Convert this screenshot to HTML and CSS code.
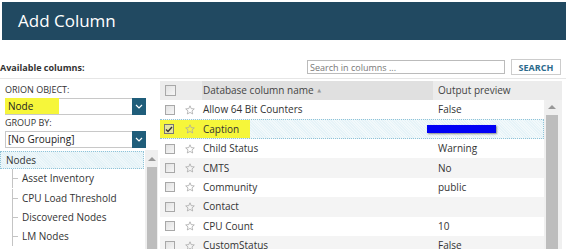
FILE: index.html
```html
<!DOCTYPE html>
<html>
<head>
<meta charset="utf-8">
<link rel="stylesheet" href="styles.css">
</head>
<body>
<svg width="0" height="0" style="position:absolute">
  <defs>
    <symbol id="star" viewBox="0 0 10 10"><path d="M5 0.8 L6.2 3.6 L9.3 3.9 L7 5.9 L7.7 9 L5 7.4 L2.3 9 L3 5.9 L0.7 3.9 L3.8 3.6 Z" fill="none" stroke="#a9a9a9" stroke-width="0.8" stroke-linejoin="round"/></symbol>
  </defs>
</svg>
<div class="header"><h1>Add Column</h1></div>
<div class="toolbar">
  <div class="avail">Available columns:</div>
  <div class="search">
    <input class="search-input" type="text" placeholder="Search in columns ...">
    <button class="search-btn">SEARCH</button>
  </div>
</div>
<div class="main">
  <div class="left">
    <div class="label">ORION OBJECT:</div>
    <div class="select"><span class="sel-text hl">Node</span><span class="sel-btn"><svg width="8" height="5" viewBox="0 0 8 5"><path d="M1 1 L4 4 L7 1" fill="none" stroke="#fff" stroke-width="1.2"/></svg></span></div>
    <div class="label">GROUP BY:</div>
    <div class="select"><span class="sel-text">[No Grouping]</span><span class="sel-btn"><svg width="8" height="5" viewBox="0 0 8 5"><path d="M1 1 L4 4 L7 1" fill="none" stroke="#fff" stroke-width="1.2"/></svg></span></div>
    <div class="tree-wrap">
      <div class="tree">
        <div class="tree-root">Nodes</div>
        <div class="tree-item"><span class="branch"></span>Asset Inventory</div>
        <div class="tree-item"><span class="branch"></span>CPU Load Threshold</div>
        <div class="tree-item"><span class="branch"></span>Discovered Nodes</div>
        <div class="tree-item"><span class="branch"></span>LM Nodes</div>
      </div>
      <div class="vscroll"><div class="arrow"></div><div class="thumb"></div></div>
    </div>
  </div>
  <div class="right">
    <div class="thead">
      <div class="c-chk"><span class="cb"></span></div>
      <div class="c-star"></div>
      <div class="c-name sorted">Database column name <span class="sort">&#9650;</span></div>
      <div class="c-out">Output preview</div>
    </div>
    <div class="tbody-wrap">
      <div class="tbody">
        <div class="row"><div class="c-chk"><span class="cb"></span></div><div class="c-star"><svg class="st"><use href="#star"/></svg></div><div class="c-name">Allow 64 Bit Counters</div><div class="c-out">False</div></div>
        <div class="row selected"><div class="hl-cells"><div class="c-chk"><span class="cb checked"><svg width="8" height="7" viewBox="0 0 8 7"><path d="M1 3.5 L3 5.5 L7 1" fill="none" stroke="#333" stroke-width="1.4"/></svg></span></div><div class="c-star"><svg class="st"><use href="#star"/></svg></div><div class="c-name">Caption</div></div><div class="c-fill"></div><div class="c-out"><span class="redact"></span></div></div>
        <div class="row"><div class="c-chk"><span class="cb"></span></div><div class="c-star"><svg class="st"><use href="#star"/></svg></div><div class="c-name">Child Status</div><div class="c-out">Warning</div></div>
        <div class="row alt"><div class="c-chk"><span class="cb"></span></div><div class="c-star"><svg class="st"><use href="#star"/></svg></div><div class="c-name">CMTS</div><div class="c-out">No</div></div>
        <div class="row"><div class="c-chk"><span class="cb"></span></div><div class="c-star"><svg class="st"><use href="#star"/></svg></div><div class="c-name">Community</div><div class="c-out">public</div></div>
        <div class="row alt"><div class="c-chk"><span class="cb"></span></div><div class="c-star"><svg class="st"><use href="#star"/></svg></div><div class="c-name">Contact</div><div class="c-out"></div></div>
        <div class="row"><div class="c-chk"><span class="cb"></span></div><div class="c-star"><svg class="st"><use href="#star"/></svg></div><div class="c-name">CPU Count</div><div class="c-out">10</div></div>
        <div class="row alt"><div class="c-chk"><span class="cb"></span></div><div class="c-star"><svg class="st"><use href="#star"/></svg></div><div class="c-name">CustomStatus</div><div class="c-out">False</div></div>
      </div>
      <div class="vscroll r"><div class="arrow"></div><div class="thumb"></div></div>
    </div>
  </div>
</div>
</body>
</html>
```
FILE: styles.css
```css
* { box-sizing: border-box; }
html, body { margin: 0; padding: 0; overflow: hidden; }
body {
  width: 566px; height: 249px;
  font-family: "Open Sans", "DejaVu Sans", sans-serif;
  color: #333;
  background: #fff;
}
.header {
  margin: 2px 0 0 2px;
  height: 38px;
  background: #214961;
  padding-left: 16px;
}
.header h1 {
  margin: 0;
  font-size: 17px;
  font-weight: 400;
  line-height: 38px;
  color: #fff;
}
.toolbar {
  height: 38px;
  display: flex;
  justify-content: space-between;
  align-items: flex-end;
  padding: 0 5px 3px 0;
}
.avail {
  font-size: 9px;
  font-weight: 700;
  color: #333;
  padding-bottom: 1px;
}
.search { display: flex; align-items: center; gap: 6px; }
.search-input {
  width: 198px; height: 14px;
  border: 1px solid #bbb;
  padding: 0 2px;
  font-family: inherit;
  font-size: 9px;
  color: #666;
  outline: none;
}
.search-input::placeholder { color: #777; }
.search-btn {
  width: 50px; height: 16px;
  border: 1px solid #ccc;
  background: #fff;
  color: #2c6a8c;
  font-family: inherit;
  font-weight: 700;
  font-size: 9px;
  padding: 0;
}
.main {
  border-top: 1px solid #e6e6e6;
  display: flex;
  gap: 2px;
  height: 172px;
}
.left {
  width: 158px;
  flex: none;
  padding-top: 5px;
  display: flex;
  flex-direction: column;
}
.label {
  font-size: 9px;
  padding-left: 5px;
  line-height: 12px;
  margin-bottom: 2px;
}
.select {
  margin-left: 5px;
  width: 141px;
  height: 17px;
  border: 1px solid #c8c8c8;
  display: flex;
  justify-content: space-between;
  margin-bottom: 2px;
}
.sel-text {
  font-size: 10px;
  line-height: 15px;
  padding-left: 2px;
  color: #222;
}
.sel-text.hl {
  background: #f6f63a;
  width: 54px;
  margin: -1px 0 0 -1px;
  height: 16px;
  line-height: 16px;
  padding-left: 3px;
}
.sel-btn {
  width: 14px;
  margin: -1px -1px -1px 0;
  background: #1f5d7a;
  display: flex;
  align-items: center;
  justify-content: center;
}
.tree-wrap {
  display: flex;
  flex: 1;
  margin-top: 1px;
}
.tree { flex: 1; }
.tree-root {
  height: 18px;
  width: 144px;
  border: 1px dotted #8fc3d8;
  background: repeating-linear-gradient(45deg, #e4f2f7 0 1px, #eef7fa 1px 2px);
  font-size: 10px;
  line-height: 16px;
  padding-left: 5px;
}
.tree-item {
  height: 19.4px;
  font-size: 10px;
  line-height: 19px;
  color: #333;
  display: flex;
  align-items: center;
  padding-left: 12px;
}
.branch {
  width: 9px;
  height: 19px;
  border-left: 1px solid #c4c4c4;
  position: relative;
  margin-right: 1px;
}
.branch::after {
  content: "";
  position: absolute;
  left: 0; top: 9px;
  width: 5px;
  border-top: 1px solid #c4c4c4;
}
.vscroll {
  width: 13px;
  background: #efefef;
  display: flex;
  flex-direction: column;
  align-items: center;
  flex: none;
}
.left .vscroll { margin-top: -1px; height: 102px; }
.arrow {
  width: 0; height: 0;
  border-left: 4px solid transparent;
  border-right: 4px solid transparent;
  border-bottom: 4px solid #999;
  margin: 7px 0 6px;
}
.thumb { width: 10px; flex: 1; background: #bdbdbd; }
.right {
  flex: 1;
  margin-top: 2px;
  margin-right: 4px;
  display: flex;
  flex-direction: column;
}
.thead {
  display: flex;
  height: 19px;
  background: #ececec;
  font-size: 10px;
  line-height: 19px;
  color: #444;
}
.c-chk { width: 23px; flex: none; display: flex; align-items: center; padding-left: 5px; }
.c-star { width: 19px; flex: none; display: flex; align-items: center; padding-left: 2px; }
.st { width: 10px; height: 10px; display: block; }
.c-name { width: 231px; flex: none; padding-left: 1px; }
.c-out { flex: 1; padding-left: 5px; }
.thead .c-name { background: #e0e0e0; }
.sort { font-size: 5px; color: #999; vertical-align: 2px; margin-left: 1px; }
.cb {
  width: 10px; height: 10px;
  border: 1px solid #a8a8a8;
  background: linear-gradient(135deg, #e2e2e2, #f6f6f6);
  display: inline-flex;
  align-items: center;
  justify-content: center;
}
.thead .cb { width: 11px; height: 11px; }
.tbody-wrap { display: flex; flex: 1; background: #f0f0f0; }
.tbody { width: 384px; flex: none; }
.row {
  display: flex;
  height: 19.45px;
  font-size: 10px;
  line-height: 19px;
  background: #fff;
  color: #333;
  align-items: center;
}
.row.alt { background: #f4f4f4; }
.row.selected {
  border: 1px dotted #8fc3d8;
  background: repeating-linear-gradient(45deg, #e6f3f8 0 1px, #f2f9fb 1px 2px);
}
.row.selected .c-chk { padding-left: 4px; }
.hl-cells {
  display: flex;
  background: #f6f63a;
  height: 100%;
  align-items: center;
  margin-left: -1px;
}
.hl-cells .c-name { width: auto; padding-right: 11px; }
.c-fill { flex: 1; }
.row.selected .c-out { flex: none; width: 112px; padding-left: 0; }
.redact {
  display: block;
  width: 69px; height: 8px;
  background: #0000f5;
  box-shadow: 1px 1px 2px rgba(0,0,0,0.45);
  margin-left: -4px;
}
.cb.checked { background: #e4e4a0; border-color: #777; }
.vscroll.r { margin-left: 2px; width: 12px; }
.vscroll.r .arrow { margin: 5px 0 6px; }
.vscroll.r .thumb { width: 12px; }
```
